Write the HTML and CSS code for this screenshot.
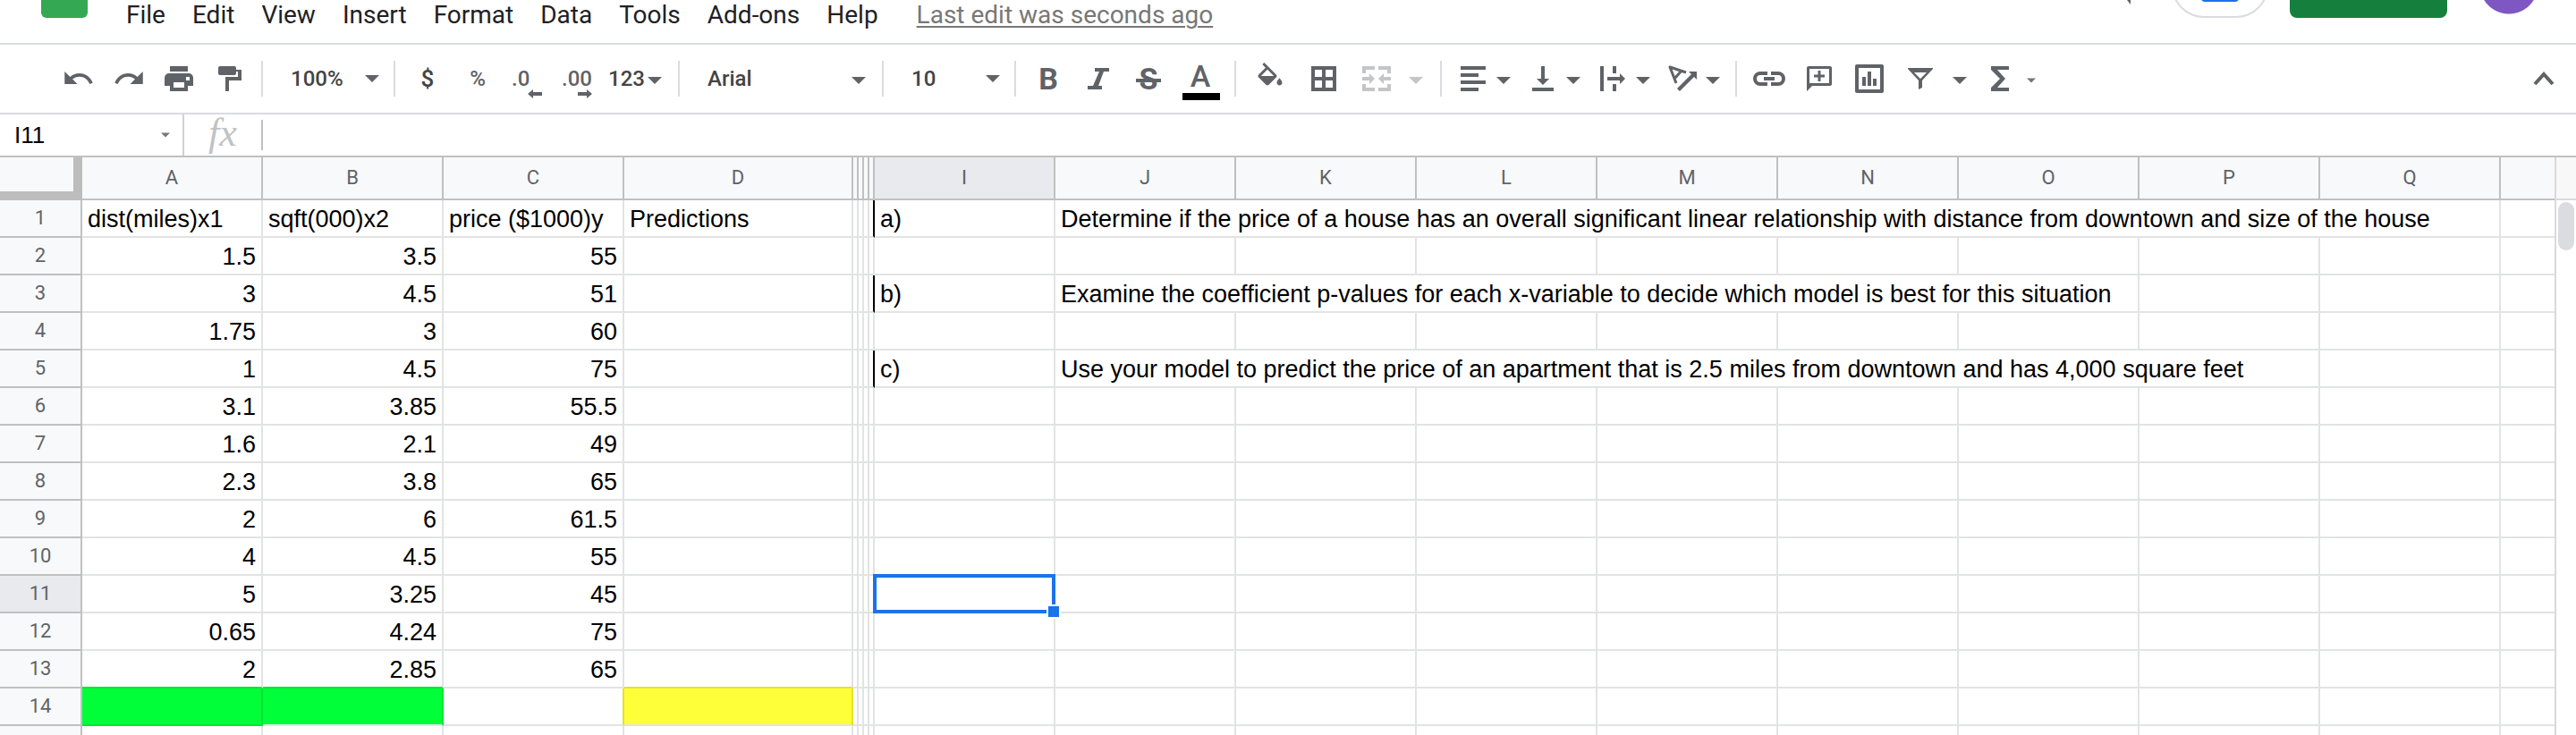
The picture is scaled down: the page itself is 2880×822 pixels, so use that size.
FILE: index.html
```
<!DOCTYPE html>
<html lang="en">
<head>
  <meta charset="UTF-8">
  <meta name="viewport" content="width=device-width, initial-scale=1.0">
  <title>Spreadsheet</title>
  <link rel="stylesheet" href="styles.css">
</head>
<body>

<svg class="defs" aria-hidden="true">
  <symbol id="caret" viewBox="0 0 16 8"><path d="M0 0h16L8 8z"/></symbol>
</svg>

<header class="top">
  <div class="logo"></div>
  <nav class="menu">
    <button>File</button>
    <button>Edit</button>
    <button>View</button>
    <button>Insert</button>
    <button>Format</button>
    <button>Data</button>
    <button>Tools</button>
    <button>Add-ons</button>
    <button>Help</button>
  </nav>
  <a class="last-edit" href="#">Last edit was seconds ago</a>
  <div class="account">
    <svg class="history" viewBox="0 0 4 5"><path d="M0 0h4v5z"/></svg>
    <button class="present" aria-label="Present"><span></span></button>
    <button class="share" aria-label="Share"></button>
    <button class="avatar" aria-label="Account"></button>
  </div>
</header>

<div class="toolbar">
  <button class="tool" aria-label="Undo"><svg class="icon" viewBox="0 0 24 24"><path d="M12.5 8c-2.650 0-5.050.99-6.900 2.600L1.500 6.700V16h9.500l-3.620-3.620c1.390-1.160 3.160-1.880 5.120-1.880 3.540 0 6.550 2.310 7.600 5.500l2.370-.78C21.080 11.030 17.150 8 12.500 8z"/></svg></button>
  <button class="tool" aria-label="Redo"><svg class="icon" viewBox="0 0 24 24"><path d="M11.500 8c2.650 0 5.050.99 6.900 2.600l4.100-3.900V16H13l3.620-3.620c-1.390-1.160-3.160-1.880-5.120-1.880-3.540 0-6.550 2.310-7.600 5.500l-2.370-.78C2.920 11.030 6.850 8 11.500 8z"/></svg></button>
  <button class="tool" aria-label="Print"><svg class="icon" viewBox="0 0 36 36"><path fill-rule="evenodd" d="M8 4h20v6H8z M7 12h22a5 5 0 0 1 5 5v9h-6v6H8v-6H2v-9a5 5 0 0 1 5-5z M12 22v6h12v-6z M26 16v4h4v-4z"/></svg></button>
  <button class="tool" aria-label="Paint format"><svg class="icon" viewBox="0 0 36 36"><path d="M8 4h16a2 2 0 0 1 2 2v2h6v12H18v12h-4V16h14v-6h-2v2a2 2 0 0 1-2 2H8a2 2 0 0 1-2-2V6a2 2 0 0 1 2-2z"/></svg></button>
  <span class="sep"></span>
  <div class="picker">
    <select aria-label="Zoom"><option>100%</option></select>
    <svg class="caret"><use href="#caret"/></svg>
  </div>
  <span class="sep"></span>
  <button class="tool currency" aria-label="Format as currency">$</button>
  <button class="tool" aria-label="Format as percent">%</button>
  <button class="tool decimal" aria-label="Decrease decimal places">.0<svg viewBox="0 0 16 10"><path d="M0 5l6-5v3h10v4H6v3z"/></svg></button>
  <button class="tool decimal" aria-label="Increase decimal places">.00<svg viewBox="0 0 16 10"><path d="M16 5l-6-5v3H0v4h10v3z"/></svg></button>
  <button class="tool formats" aria-label="More formats">123<svg class="caret"><use href="#caret"/></svg></button>
  <span class="sep"></span>
  <div class="picker font">
    <select aria-label="Font"><option>Arial</option></select>
    <svg class="caret"><use href="#caret"/></svg>
  </div>
  <span class="sep"></span>
  <div class="picker">
    <select aria-label="Font size"><option>10</option></select>
    <svg class="caret"><use href="#caret"/></svg>
  </div>
  <span class="sep"></span>
  <button class="tool letter" aria-label="Bold">B</button>
  <button class="tool" aria-label="Italic"><svg class="icon" viewBox="0 0 36 36"><path d="M14 6h16v4h-6l-6 16h4v4H6v-4h6l7-16h-5z"/></svg></button>
  <button class="tool letter strike" aria-label="Strikethrough">S</button>
  <button class="tool wide letter color" aria-label="Text color">A</button>
  <span class="sep"></span>
  <button class="tool wide" aria-label="Fill color"><svg class="icon" viewBox="0 0 24 24"><path d="M16.560 8.940L7.620 0 6.210 1.410l2.380 2.380-5.150 5.150c-.59.59-.59 1.540 0 2.120l5.500 5.500c.29.29.68.44 1.060.44s.77-.15 1.060-.44l5.500-5.500c.59-.58.59-1.530 0-2.120zM5.210 10L10 5.210 14.790 10H5.210zM19 11.500s-2 2.170-2 3.500c0 1.100.9 2 2 2s2-.9 2-2c0-1.330-2-3.500-2-3.500z"/></svg></button>
  <button class="tool wide" aria-label="Borders"><svg class="icon" viewBox="0 0 36 36"><path fill-rule="evenodd" d="M4 4h28v28H4z M8 8v8h8V8z M20 8v8h8V8z M8 20v8h8v-8z M20 20v8h8v-8z"/></svg></button>
  <button class="tool split" aria-label="Merge cells" disabled><svg class="icon" viewBox="0 0 36 36"><path d="M2 4h14v4H6v4H2z M20 4h14v8h-4V8H20z M2 24h4v4h10v4H2z M30 24h4v8H20v-4h10z M2 16h8v-4l6 6-6 6v-4H2z M34 16h-8v-4l-6 6 6 6v-4h8z"/></svg><svg class="caret"><use href="#caret"/></svg></button>
  <span class="sep"></span>
  <button class="tool menu-tool" aria-label="Horizontal align"><svg class="icon" viewBox="0 0 36 36"><path d="M4 4h28v4H4z M4 12h20v4H4z M4 20h28v4H4z M4 28h20v4H4z"/></svg><svg class="caret"><use href="#caret"/></svg></button>
  <button class="tool menu-tool" aria-label="Vertical align"><svg class="icon" viewBox="0 0 36 36"><path d="M16 4h4v14h5l-7 7-7-7h5z M6 28h24v4H6z"/></svg><svg class="caret"><use href="#caret"/></svg></button>
  <button class="tool menu-tool" aria-label="Text wrapping"><svg class="icon" viewBox="0 0 36 36"><path d="M4 4h4v28H4z M18 4h4v8h-4z M18 24h4v8h-4z M12 16h14v-4l6 6-6 6v-4H12z"/></svg><svg class="caret"><use href="#caret"/></svg></button>
  <button class="tool menu-tool" aria-label="Text rotation"><svg class="icon" viewBox="0 0 36 36"><path fill="none" stroke="currentColor" stroke-width="3" stroke-linejoin="round" d="M11 23L4 5l18 6M17 9l-7 8"/><path d="M12 29l16-16-3-3h9v9l-3-3-16 16z"/></svg><svg class="caret"><use href="#caret"/></svg></button>
  <span class="sep"></span>
  <button class="tool" aria-label="Insert link"><svg class="icon" viewBox="0 0 36 36"><path fill="none" stroke="currentColor" stroke-width="4" d="M16 12H8a6 6 0 0 0 0 12h8M20 12h8a6 6 0 0 1 0 12h-8M12 18h12"/></svg></button>
  <button class="tool" aria-label="Insert comment"><svg class="icon" viewBox="0 0 36 36"><path fill-rule="evenodd" d="M6 4h24a2 2 0 0 1 2 2v18a2 2 0 0 1-2 2H10l-6 6V6a2 2 0 0 1 2-2z M7 7v16h22V7z"/><path d="M16.500 9h3v4.500H24v3h-4.500V21h-3v-4.500H12v-3h4.500z"/></svg></button>
  <button class="tool" aria-label="Insert chart"><svg class="icon" viewBox="0 0 36 36"><path fill-rule="evenodd" d="M4 2h28a2 2 0 0 1 2 2v28a2 2 0 0 1-2 2H4a2 2 0 0 1-2-2V4a2 2 0 0 1 2-2z M6 6v24h24V6z"/><path d="M10 16h4v10h-4z M16 10h4v16h-4z M22 18h4v8h-4z"/></svg></button>
  <button class="tool split" aria-label="Filter"><svg class="icon" viewBox="0 0 36 36"><path fill-rule="evenodd" d="M4 6h28v1L20 20v8l-4 2V20L4 7z M11 11l7 7 7-7z"/></svg><svg class="caret"><use href="#caret"/></svg></button>
  <button class="tool functions" aria-label="Functions"><svg class="icon" viewBox="0 0 36 36"><path d="M8 4h20v4H15l9 10-9 10h13v4H8v-4l10-10L8 8z"/></svg><svg class="caret small"><use href="#caret"/></svg></button>
  <button class="tool collapse" aria-label="Hide the menus"><svg class="icon" viewBox="0 0 36 36"><path fill="none" stroke="currentColor" stroke-width="4" d="M8 24l10-11 10 11"/></svg></button>
</div>

<div class="formula-bar">
  <div class="name-box">
    <input type="text" value="I11" aria-label="Name box">
    <svg class="caret small"><use href="#caret"/></svg>
  </div>
  <span class="fx">fx</span>
  <input class="formula" type="text" aria-label="Formula">
</div>

<main class="sheet">
  <table>
    <colgroup>
      <col class="col-head"><col class="col"><col class="col"><col class="col"><col class="col-d">
      <col class="col-thin"><col class="col-thin"><col class="col-thin"><col class="col-thin">
      <col class="col"><col class="col"><col class="col"><col class="col"><col class="col">
      <col class="col"><col class="col"><col class="col"><col class="col"><col>
    </colgroup>
    <thead>
      <tr>
        <td class="corner"></td>
        <th>A</th><th>B</th><th>C</th><th>D</th>
        <th></th><th></th><th></th><th></th>
        <th class="active">I</th><th>J</th><th>K</th><th>L</th><th>M</th><th>N</th><th>O</th><th>P</th><th>Q</th><th></th>
      </tr>
    </thead>
    <tbody>
      <tr>
        <th>1</th><td>dist(miles)x1</td><td>sqft(000)x2</td><td>price ($1000)y</td><td>Predictions</td>
        <td></td><td></td><td></td><td class="bar-right"></td>
        <td>a)</td><td colspan="8">Determine if the price of a house has an overall significant linear relationship with distance from downtown and size of the house</td><td></td>
      </tr>
      <tr>
        <th>2</th><td class="num">1.5</td><td class="num">3.5</td><td class="num">55</td><td></td>
        <td></td><td></td><td></td><td></td>
        <td></td><td></td><td></td><td></td><td></td><td></td><td></td><td></td><td></td><td></td>
      </tr>
      <tr>
        <th>3</th><td class="num">3</td><td class="num">4.5</td><td class="num">51</td><td></td>
        <td></td><td></td><td></td><td class="bar-right"></td>
        <td>b)</td><td colspan="6">Examine the coefficient p-values for each x-variable to decide which model is best for this situation</td><td></td><td></td><td></td>
      </tr>
      <tr>
        <th>4</th><td class="num">1.75</td><td class="num">3</td><td class="num">60</td><td></td>
        <td></td><td></td><td></td><td></td>
        <td></td><td></td><td></td><td></td><td></td><td></td><td></td><td></td><td></td><td></td>
      </tr>
      <tr>
        <th>5</th><td class="num">1</td><td class="num">4.5</td><td class="num">75</td><td></td>
        <td></td><td></td><td></td><td class="bar-right"></td>
        <td>c)</td><td colspan="7">Use your model to predict the price of an apartment that is 2.5 miles from downtown and has 4,000 square feet</td><td></td><td></td>
      </tr>
      <tr>
        <th>6</th><td class="num">3.1</td><td class="num">3.85</td><td class="num">55.5</td><td></td>
        <td></td><td></td><td></td><td></td>
        <td></td><td></td><td></td><td></td><td></td><td></td><td></td><td></td><td></td><td></td>
      </tr>
      <tr>
        <th>7</th><td class="num">1.6</td><td class="num">2.1</td><td class="num">49</td><td></td>
        <td></td><td></td><td></td><td></td>
        <td></td><td></td><td></td><td></td><td></td><td></td><td></td><td></td><td></td><td></td>
      </tr>
      <tr>
        <th>8</th><td class="num">2.3</td><td class="num">3.8</td><td class="num">65</td><td></td>
        <td></td><td></td><td></td><td></td>
        <td></td><td></td><td></td><td></td><td></td><td></td><td></td><td></td><td></td><td></td>
      </tr>
      <tr>
        <th>9</th><td class="num">2</td><td class="num">6</td><td class="num">61.5</td><td></td>
        <td></td><td></td><td></td><td></td>
        <td></td><td></td><td></td><td></td><td></td><td></td><td></td><td></td><td></td><td></td>
      </tr>
      <tr>
        <th>10</th><td class="num">4</td><td class="num">4.5</td><td class="num">55</td><td></td>
        <td></td><td></td><td></td><td></td>
        <td></td><td></td><td></td><td></td><td></td><td></td><td></td><td></td><td></td><td></td>
      </tr>
      <tr>
        <th class="active">11</th><td class="num">5</td><td class="num">3.25</td><td class="num">45</td><td></td>
        <td></td><td></td><td></td><td></td>
        <td class="selected"><div class="selection"><span></span></div></td><td></td><td></td><td></td><td></td><td></td><td></td><td></td><td></td><td></td>
      </tr>
      <tr>
        <th>12</th><td class="num">0.65</td><td class="num">4.24</td><td class="num">75</td><td></td>
        <td></td><td></td><td></td><td></td>
        <td></td><td></td><td></td><td></td><td></td><td></td><td></td><td></td><td></td><td></td>
      </tr>
      <tr>
        <th>13</th><td class="num green-below">2</td><td class="num green-below">2.85</td><td class="num">65</td><td class="yellow-below"></td>
        <td></td><td></td><td></td><td></td>
        <td></td><td></td><td></td><td></td><td></td><td></td><td></td><td></td><td></td><td></td>
      </tr>
      <tr>
        <th>14</th><td class="green green-below"></td><td class="green"></td><td class="yellow-next"></td><td class="yellow"></td>
        <td></td><td></td><td></td><td></td>
        <td></td><td></td><td></td><td></td><td></td><td></td><td></td><td></td><td></td><td></td>
      </tr>
      <tr>
        <th></th><td></td><td></td><td></td><td></td>
        <td></td><td></td><td></td><td></td>
        <td></td><td></td><td></td><td></td><td></td><td></td><td></td><td></td><td></td><td></td>
      </tr>
    </tbody>
  </table>
  <div class="scrollbar"><div class="scroll-head"></div><div class="thumb"></div></div>
</main>

</body>
</html>
```
FILE: styles.css
```
* {
  box-sizing: border-box;
}
body {
  margin: 0;
  height: 100vh;
  display: flex;
  flex-direction: column;
  overflow: hidden;
  background-color: #fff;
  font-family: Roboto, sans-serif;
  color: #202124;
}
button, select, input {
  font: inherit;
  color: inherit;
  background: none;
  border: none;
  padding: 0;
  margin: 0;
}
svg {
  display: block;
  fill: currentColor;
}
.defs {
  position: absolute;
  width: 0;
  height: 0;
}

/* menu bar */
.top {
  flex: none;
  display: flex;
  align-items: flex-start;
  height: 50px;
  padding: 0 38px 0 46px;
  border-bottom: 2px solid #dadce0;
  font-size: 28px;
  line-height: 34px;
}
.logo {
  width: 52px;
  height: 20px;
  margin-right: 28px;
  border-radius: 0 0 6px 6px;
  background-color: #34a853;
}
.menu {
  display: flex;
}
.menu button {
  padding: 0 15px;
}
.last-edit {
  margin-left: 28px;
  color: #777;
  text-decoration-thickness: 2px;
  text-underline-offset: 3px;
}
.account {
  display: flex;
  align-items: flex-end;
  height: 20px;
  margin-left: auto;
  overflow: hidden;
}
.history {
  width: 4px;
  height: 5px;
  margin: 0 46px 15px 0;
  color: #5f6368;
}
.present {
  flex: none;
  display: flex;
  justify-content: center;
  width: 108px;
  height: 72px;
  margin-right: 24px;
  border: 2px solid #dadce0;
  border-radius: 36px;
}
.present span {
  align-self: flex-end;
  width: 42px;
  height: 30px;
  margin-bottom: 16px;
  border-radius: 4px;
  background-color: #1a73e8;
}
.share {
  width: 176px;
  height: 72px;
  margin-right: 32px;
  border-radius: 8px;
  background-color: #15803d;
}
.avatar {
  width: 74px;
  height: 66px;
  margin-bottom: 4px;
  background: radial-gradient(circle, #7e57c2 32px, transparent 33px);
}

/* toolbar */
.toolbar {
  flex: none;
  display: flex;
  align-items: center;
  height: 78px;
  padding: 0 8px 0 60px;
  border-bottom: 2px solid #dadce0;
  color: #5f6368;
  font-size: 24px;
  font-weight: 500;
}
.tool {
  position: relative;
  flex: none;
  display: flex;
  align-items: center;
  justify-content: center;
  width: 56px;
  height: 52px;
  color: #5f6368;
}
.tool.wide {
  width: 60px;
}
.tool:disabled {
  color: #c4c5c6;
}
.tool.currency {
  color: #444;
  font-size: 26px;
}
.icon {
  flex: none;
  width: 36px;
  height: 36px;
}
.caret {
  flex: none;
  width: 16px;
  height: 8px;
  color: #5f6368;
}
.tool:disabled .caret {
  color: inherit;
}
.caret.small {
  width: 10px;
  height: 6px;
  color: #777;
}
.tool .caret {
  margin-top: 4px;
}
.sep {
  flex: none;
  width: 2px;
  height: 40px;
  margin: 0 8px;
  background-color: #dadce0;
}
.picker {
  position: relative;
  width: 130px;
  color: #444;
}
.picker.font {
  width: 210px;
}
.picker select {
  appearance: none;
  width: 100%;
  height: 52px;
  padding-left: 23px;
}
.picker .caret {
  position: absolute;
  top: 22px;
  right: 8px;
  pointer-events: none;
}
.picker.font .caret {
  top: 24px;
  right: 10px;
}
.decimal {
  justify-content: flex-start;
  padding-left: 10px;
}
.decimal svg {
  position: absolute;
  right: 12px;
  bottom: 4px;
  width: 16px;
  height: 10px;
}
.tool.formats {
  justify-content: flex-start;
  width: 76px;
  padding-left: 6px;
  gap: 3px;
  color: #444;
}
.letter {
  font-size: 34px;
  font-weight: 700;
}
.strike::after {
  content: "";
  position: absolute;
  left: 14px;
  right: 14px;
  top: 26px;
  height: 4px;
  background-color: #5f6368;
}
.color {
  padding-bottom: 6px;
  font-weight: 500;
}
.color::after {
  content: "";
  position: absolute;
  left: 10px;
  top: 42px;
  width: 42px;
  height: 8px;
  background-color: #000;
}
.split {
  width: 92px;
  gap: 18px;
}
.menu-tool {
  width: 78px;
  gap: 8px;
}
.functions {
  width: 74px;
  gap: 12px;
}
.collapse {
  margin-left: auto;
}

/* name box and formula */
.formula-bar {
  flex: none;
  display: flex;
  align-items: center;
  height: 48px;
  border-bottom: 2px solid #c0c0c0;
}
.name-box {
  display: flex;
  align-items: center;
  width: 206px;
  height: 46px;
  padding: 0 14px 0 16px;
  border-right: 2px solid #d0d0d0;
}
.name-box input {
  flex: 1;
  min-width: 0;
  font: 26px "Liberation Sans", Arial, sans-serif;
  color: #000;
}
.fx {
  width: 86px;
  padding-bottom: 4px;
  color: #c0c2c4;
  font: italic 44px/42px "Liberation Serif", serif;
  text-align: center;
}
.formula {
  flex: 1;
  height: 34px;
  padding: 0 8px;
  border-left: 2px solid #c0c0c0;
}

/* grid */
.sheet {
  flex: 1;
  display: flex;
  align-items: stretch;
  min-height: 0;
  overflow: hidden;
}
table {
  flex: 1;
  align-self: flex-start;
  width: 100%;
  min-width: 0;
  table-layout: fixed;
  border-collapse: separate;
  border-spacing: 0;
}
.col-head {
  width: 92px;
}
.col {
  width: 202px;
}
.col-d {
  width: 256px;
}
.col-thin {
  width: 6px;
}
th {
  height: 42px;
  padding: 0;
  border-right: 2px solid #c0c0c0;
  border-bottom: 2px solid #c0c0c0;
  background-color: #f8f9fa;
  color: #5f6368;
  font-size: 22px;
  font-weight: 400;
  line-height: 26px;
}
thead th {
  height: 48px;
}
thead th:last-child {
  border-right: none;
}
th.active {
  background-color: #e8eaed;
}
td {
  height: 42px;
  padding: 4px 6px;
  border-right: 2px solid #e2e3e3;
  border-bottom: 2px solid #e2e3e3;
  color: #000;
  font-family: "Liberation Sans", Arial, sans-serif;
  font-size: 27px;
  line-height: 30px;
  vertical-align: bottom;
  white-space: nowrap;
}
td:empty {
  padding: 0;
}
td:last-child {
  border-right: none;
}
td.corner {
  border-right: 10px solid #bdbdbd;
  border-bottom: 10px solid #bdbdbd;
  background-color: #f8f9fa;
}
.num {
  text-align: right;
}
.bar-right {
  border-right-color: #000;
}
.green-below {
  border-bottom-color: #00e632;
}
.green {
  background-color: #00ff38;
  border-right-color: #00e632;
}
.yellow-below {
  border-bottom-color: #e2e22f;
}
.yellow-next {
  border-right-color: #e2e22f;
}
.yellow {
  background-color: #ffff39;
  border-right-color: #e2e22f;
}
.selected {
  position: relative;
}
.selection {
  position: absolute;
  inset: -2px;
  border: 4px solid #1a73e8;
}
.selection span {
  position: absolute;
  right: -10px;
  bottom: -10px;
  width: 16px;
  height: 16px;
  border: 2px solid #fff;
  background-color: #1a73e8;
}
.scrollbar {
  flex: none;
  width: 24px;
  border-left: 2px solid #d9d9d9;
}
.scroll-head {
  height: 48px;
  border-bottom: 2px solid #d9d9d9;
  background-color: #f8f8f8;
}
.thumb {
  width: 18px;
  height: 54px;
  margin: 2px;
  border-radius: 9px;
  background-color: #dadce0;
}
```
